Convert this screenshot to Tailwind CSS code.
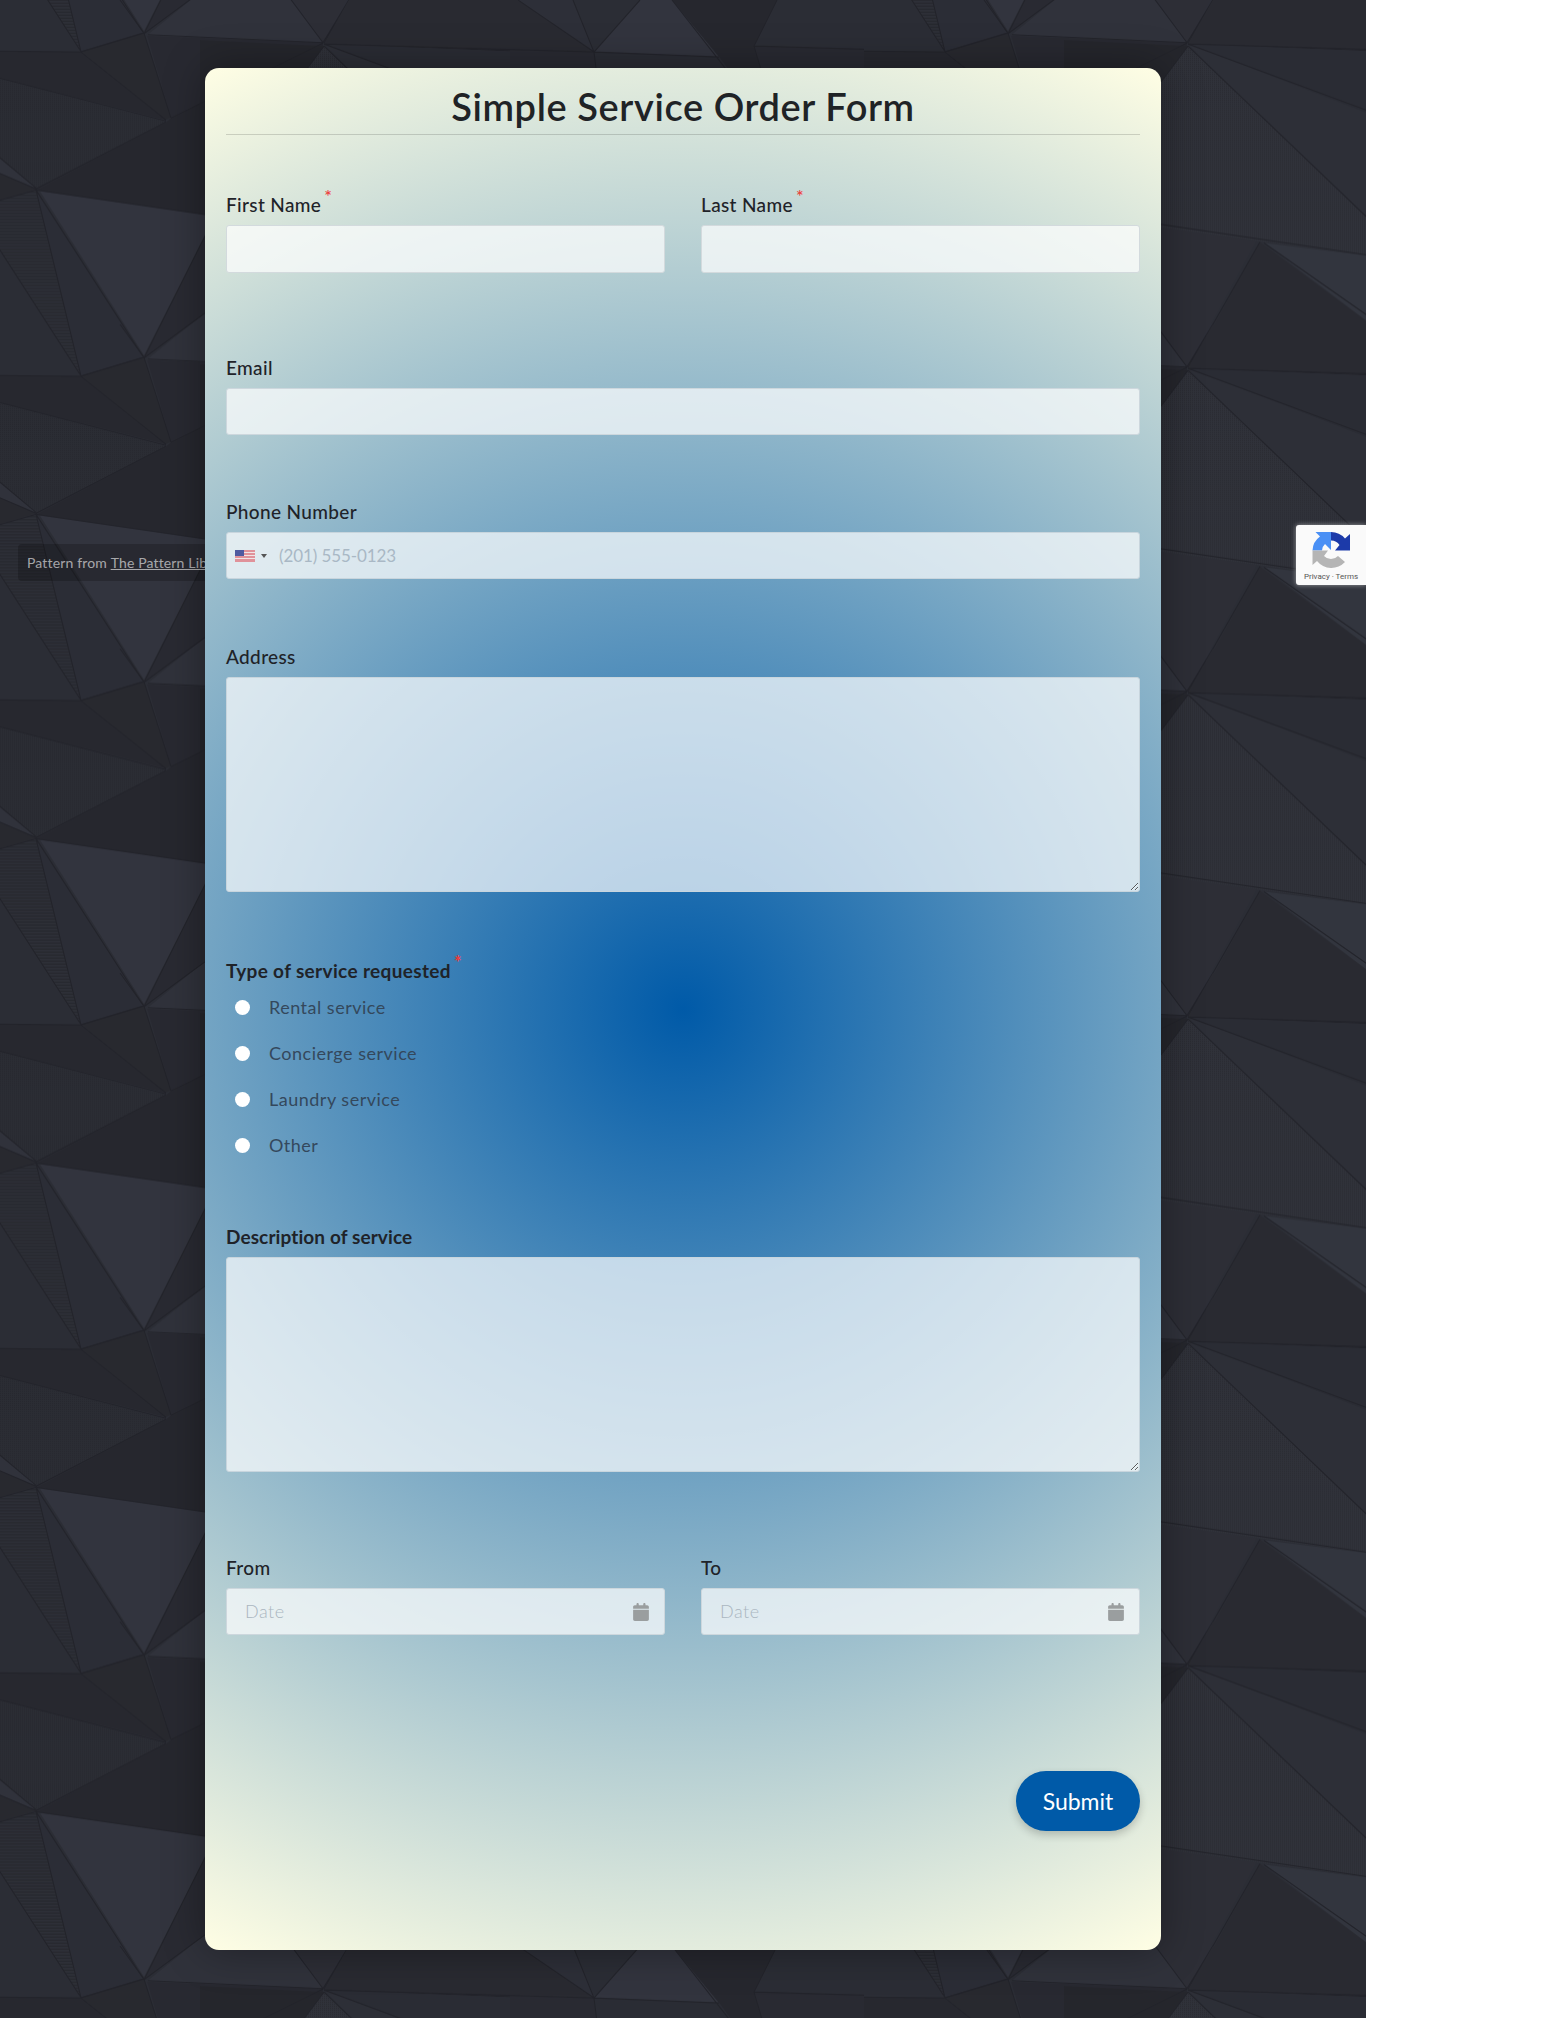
<!DOCTYPE html>
<html lang="en">
  <head>
    <meta charset="UTF-8" />
    <title>Simple Service Order Form</title>
    <script src="https://cdn.jsdelivr.net/npm/@tailwindcss/browser@4"></script>
  </head>
  <body class="bg-white">
    <div class="relative w-[1366px] h-[2018px] overflow-hidden bg-[#2b2d35] font-['Lato',sans-serif] text-[#1f2329]">
      <!-- background pattern -->
      <svg class="absolute inset-0 w-full h-full" aria-hidden="true">
        <defs>
          <pattern id="hatch" width="4" height="3" patternUnits="userSpaceOnUse">
            <rect width="4" height="3" fill="#2d2f37" />
            <rect width="4" height="1" fill="#24252b" />
          </pattern>
          <pattern id="dots" width="2" height="2" patternUnits="userSpaceOnUse">
            <rect width="2" height="2" fill="#2b2d34" />
            <rect width="1" height="1" fill="#27282f" />
          </pattern>
          <pattern id="dots2" width="2" height="2" patternUnits="userSpaceOnUse">
            <rect width="2" height="2" fill="#30323a" />
            <rect width="1" height="1" fill="#2a2b32" />
          </pattern>
          <g id="shapes">
            <g>
              <polygon points="-20,51 81,52 166,120 -20,73" fill="#27282f" />
              <polygon points="-20,73 166,122 36,189 -20,145" fill="url(#dots)" />
              <polygon points="-20,141 36,188 -20,165" fill="#30323b" />
              <polygon points="-20,165 36,189 -20,206" fill="#28292f" />
              <polygon points="-20,206 36,190 81,376 -20,219" fill="url(#hatch)" />
              <polygon points="36,190 144,358 81,376" fill="#2b2d36" />
              <polygon points="81,376 144,357 171,442 166,444" fill="#28292f" />
              <polygon points="36,190 166,122 171,118 323,43 323,200 215,216" fill="#26272e" />
              <polygon points="40,191 215,216 144,355" fill="#32343e" />
              <polygon points="144,358 215,216 300,200 205,313" fill="#292a32" />
              <polygon points="148,359 323,367 291,324 285,300 205,313" fill="#30323b" />
              <polygon points="147,360 323,367 171,442" fill="#282931" />
              <polygon points="323,367 291,324 349,324" fill="#2c2e37" />
              <polygon points="349,0 324,44 594,52 518,0" fill="#292a31" />
              <polygon points="324,44 520,52 520,120" fill="#2a2c34" />
              <polygon points="324,44 520,120 520,240" fill="#2d2f37" />
              <polygon points="324,46 550,262 396,241 280,225 280,82" fill="url(#dots2)" />
              <polygon points="280,225 392,241 323,367 280,305" fill="#2d2e36" />
              <polygon points="400,243 520,258 520,334" fill="#32353e" />
              <polygon points="396,242 520,334 520,376 326,368" fill="#292a31" />
              <polygon points="200,40 324,46 297,82 200,200" fill="#25262c" />
              <polygon points="518,0 573,0 594,52" fill="#2d2f38" />
              <polygon points="573,0 640,0 594,52" fill="#2b2d35" />
              <polygon points="640,0 672,0 719,57 594,52" fill="#32343e" />
              <polygon points="672,0 719,57 750,100 770,100 754,46 777,0" fill="#26272e" />
              <polygon points="777,0 890,0 890,50 754,46" fill="#2b2d35" />
              <polygon points="754,46 770,100 890,100 890,50" fill="#292a32" />
              <polygon points="594,52 719,57 750,100 600,100" fill="#2a2c34" />
              <polygon points="510,50 594,52 600,100 510,100" fill="#292a32" />
            </g>
            <path fill="none" stroke="#22232a" stroke-width="1.2" d="M-20 51L81 52L144 33M-20 73L166 121M81 52L166 120M36 189L166 122M171 118L323 43M144 33L171 118M-20 141L36 188M-20 165L36 189M-20 206L36 190M-20 219L81 376M36 190L81 376M36 190L144 358M36 190L215 216M144 358L215 216M144 358L205 313M81 376L144 357M148 359L323 367M323 367L291 324M323 367L349 324M144 33L120 0M324 44L594 52L719 57M324 44L510 113M324 46L510 224M280 222L510 256M396 242L324 368M400 243L510 320M326 368L510 375M324 46L297 82M518 0L594 52M573 0L594 52M640 0L594 52M672 0L750 100M594 52L600 100M777 0L754 46L770 100M754 46L890 50" />
          </g>
          <pattern id="tile" width="864" height="324.33" patternUnits="userSpaceOnUse">
            <rect width="864" height="325" fill="#2b2d35" />
            <use href="#shapes" y="-324.33" />
            <use href="#shapes" />
          </pattern>
        </defs>
        <rect width="100%" height="100%" fill="url(#tile)" />
      </svg>

      <!-- attribution, runs under the card -->
      <div class="absolute left-[18px] top-[544px] h-[37px] flex items-center px-[9px] rounded bg-black/20 text-sm tracking-[0.15px] text-white/60 whitespace-nowrap">
        Pattern from&nbsp;<a class="underline">The Pattern Library</a>
      </div>

      <!-- recaptcha badge -->
      <div class="absolute right-0 top-[525px] w-[70px] h-[60px] z-20 rounded-l-[3px] bg-[#fafafa] shadow-[0_0_5px_rgba(225,225,225,0.6)] flex flex-col items-center">
        <svg class="mt-[7px] w-[38px] h-[38px]" viewBox="0 0 38 38">
          <path fill="#4a90f5" d="M19 0H3.5L8 4.5A18 18 0 0 0 .5 18.5H10A9 9 0 0 1 13 12L19 18Z" />
          <path fill="#1c3aa9" d="M19 0A18.5 18.5 0 0 1 33 6.5L38 2V18.5H23L27.5 13A10 10 0 0 0 19 8.5Z" />
          <path fill="#b5b5b5" d="M.5 18.5V33L5 29A18.5 18.5 0 0 0 33 30L26 24A9.5 9.5 0 0 1 12 24L16 18.5Z" />
        </svg>
        <div class="mt-[2px] text-[8px] leading-[10px] text-[#555] whitespace-nowrap font-['Roboto',sans-serif]">Privacy · Terms</div>
      </div>

      <main class="relative z-10 mx-auto mt-[68px] w-[956px] h-[1882px] px-[21px] rounded-[14px] bg-[radial-gradient(circle,#005aa8,#fffee4)] shadow-[0_0_40px_rgba(0,0,0,0.35)]">
        <header class="h-[67px] pt-[10px] flex items-center justify-center border-b border-black/15">
          <h1 class="text-[38px] font-semibold tracking-[0.6px] text-[#1f2326]">Simple Service Order Form</h1>
        </header>

        <form>
          <div class="mt-[58px] grid grid-cols-2 gap-x-[36px]">
            <div>
              <label class="flex h-6 mb-2 items-center text-[19px] font-medium tracking-[0.35px]">First Name<sup class="ml-[3px] text-[18px] text-[#ee3a3a]">*</sup></label>
              <input type="text" class="block w-full h-[48px] rounded-[3px] border border-[#d3dadd] bg-white/70" />
            </div>
            <div>
              <label class="flex h-6 mb-2 items-center text-[19px] font-medium tracking-[0.35px]">Last Name<sup class="ml-[3px] text-[18px] text-[#ee3a3a]">*</sup></label>
              <input type="text" class="block w-full h-[48px] rounded-[3px] border border-[#d3dadd] bg-white/70" />
            </div>
          </div>

          <div class="mt-[83px]">
            <label class="flex h-6 mb-2 items-center text-[19px] font-medium tracking-[0.35px]">Email</label>
            <input type="email" class="block w-full h-[47px] rounded-[3px] border border-[#cdd7dd] bg-white/70" />
          </div>

          <div class="mt-[65px]">
            <label class="flex h-6 mb-2 items-center text-[19px] font-medium tracking-[0.35px]">Phone Number</label>
            <div class="flex items-center h-[47px] rounded-[3px] border border-[#c8d5dd] bg-white/70">
              <svg class="ml-[8px] w-[20px] h-[12px]" viewBox="0 0 20 12">
                <rect width="20" height="12" fill="#e0929a" />
                <rect y="2" width="20" height="1" fill="#f0e4e6" />
                <rect y="5" width="20" height="1" fill="#f0e4e6" />
                <rect y="8" width="20" height="1" fill="#f0e4e6" />
                <rect width="9" height="6" fill="#4f5aa0" />
              </svg>
              <span class="ml-[6px] w-0 h-0 border-x-[3px] border-x-transparent border-t-[4px] border-t-[#555]"></span>
              <input type="tel" placeholder="(201) 555-0123" class="ml-[12px] flex-1 h-full bg-transparent text-[17px] tracking-[-0.1px] placeholder:text-[#a9b8c5]" />
            </div>
          </div>

          <div class="mt-[66px]">
            <label class="flex h-6 mb-2 items-center text-[19px] font-medium tracking-[0.35px]">Address</label>
            <textarea class="block w-full h-[215px] rounded-[3px] border border-[#c8d5dd] bg-white/70"></textarea>
          </div>

          <div class="mt-[67px]">
            <label class="flex h-6 mb-[1px] items-center text-[19px] font-bold tracking-[0.35px]">Type of service requested<sup class="ml-[3px] text-[18px] text-[#ee3a3a]">*</sup></label>
            <div class="flex flex-col text-[18px] tracking-[0.5px] text-[#34485c]">
              <label class="flex h-[46px] items-center gap-[19px] pl-[9px]"><input type="radio" name="service" class="appearance-none w-[15px] h-[15px] rounded-full bg-white" />Rental service</label>
              <label class="flex h-[46px] items-center gap-[19px] pl-[9px]"><input type="radio" name="service" class="appearance-none w-[15px] h-[15px] rounded-full bg-white" />Concierge service</label>
              <label class="flex h-[46px] items-center gap-[19px] pl-[9px]"><input type="radio" name="service" class="appearance-none w-[15px] h-[15px] rounded-full bg-white" />Laundry service</label>
              <label class="flex h-[46px] items-center gap-[19px] pl-[9px]"><input type="radio" name="service" class="appearance-none w-[15px] h-[15px] rounded-full bg-white" />Other</label>
            </div>
          </div>

          <div class="mt-[57px]">
            <label class="flex h-6 mb-2 items-center text-[19px] font-bold tracking-[0.1px]">Description of service</label>
            <textarea class="block w-full h-[215px] rounded-[3px] border border-[#c8d5dd] bg-white/70"></textarea>
          </div>

          <div class="mt-[84px] grid grid-cols-2 gap-x-[36px]">
            <div>
              <label class="flex h-6 mb-2 items-center text-[19px] font-medium tracking-[0.35px]">From</label>
              <div class="flex items-center h-[47px] pl-[18px] pr-[15px] rounded-[3px] border border-[#cdd7dd] bg-white/70">
                <input type="text" placeholder="Date" class="flex-1 min-w-0 bg-transparent text-[18px] font-light tracking-[0.5px] placeholder:text-[#aab6c0]" />
                <svg class="w-[16px] h-[18px] fill-[#9a9e9f]" viewBox="0 0 448 512"><path d="M96 32V64H48C21.5 64 0 85.5 0 112v48H448V112c0-26.5-21.5-48-48-48H352V32c0-17.7-14.3-32-32-32s-32 14.3-32 32V64H160V32c0-17.7-14.3-32-32-32S96 14.3 96 32zM448 192H0V464c0 26.5 21.5 48 48 48H400c26.5 0 48-21.5 48-48V192z" /></svg>
              </div>
            </div>
            <div>
              <label class="flex h-6 mb-2 items-center text-[19px] font-medium tracking-[0.35px]">To</label>
              <div class="flex items-center h-[47px] pl-[18px] pr-[15px] rounded-[3px] border border-[#cdd7dd] bg-white/70">
                <input type="text" placeholder="Date" class="flex-1 min-w-0 bg-transparent text-[18px] font-light tracking-[0.5px] placeholder:text-[#aab6c0]" />
                <svg class="w-[16px] h-[18px] fill-[#9a9e9f]" viewBox="0 0 448 512"><path d="M96 32V64H48C21.5 64 0 85.5 0 112v48H448V112c0-26.5-21.5-48-48-48H352V32c0-17.7-14.3-32-32-32s-32 14.3-32 32V64H160V32c0-17.7-14.3-32-32-32S96 14.3 96 32zM448 192H0V464c0 26.5 21.5 48 48 48H400c26.5 0 48-21.5 48-48V192z" /></svg>
              </div>
            </div>
          </div>

          <div class="mt-[136px] flex justify-end">
            <button type="button" class="w-[124px] h-[60px] rounded-[30px] bg-[#005aa8] text-white text-[23px] shadow-[0_4px_8px_rgba(0,0,0,0.2)]">Submit</button>
          </div>
        </form>
      </main>
    </div>
  </body>
</html>
